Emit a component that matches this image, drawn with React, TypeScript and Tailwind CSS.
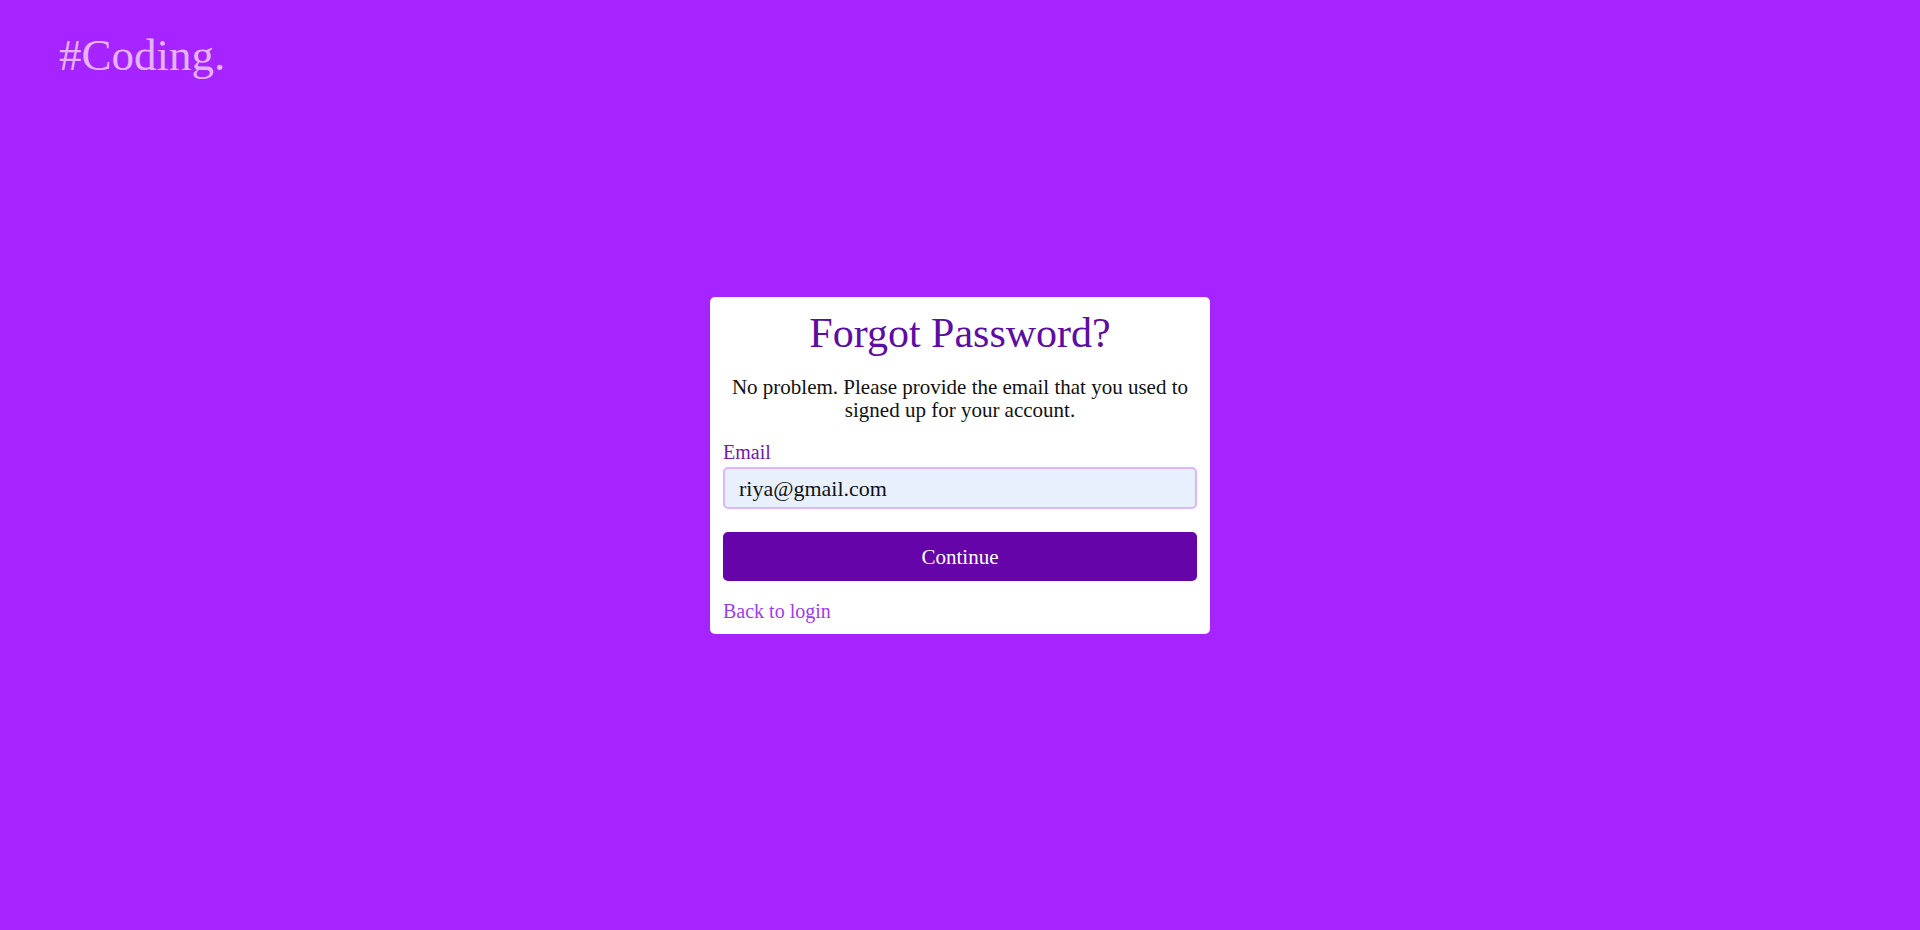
import React from "react";

export default function App() {
  return (
    <div
      className="h-screen w-full bg-[#a624ff] grid grid-rows-[1fr_auto_1fr]"
      style={{ fontFamily: '"Liberation Serif", "Times New Roman", serif' }}
    >
      <div className="self-start pl-[59px] pt-[30px]">
        <h1 className="text-[45px] leading-[50px] text-[#e6b2f8] font-normal">#Coding.</h1>
      </div>
      <div className="flex justify-center">
        <div className="w-[500px] bg-white rounded-[5px] px-[13px] pt-[12px] pb-[11px] flex flex-col">
          <h2 className="text-[42px] leading-[48px] text-center text-[#5c0ea2] font-normal">
            Forgot Password?
          </h2>
          <p className="mt-[19px] text-[21px] leading-[23px] text-center text-[#111111]">
            No problem. Please provide the email that you used to signed up for your account.
          </p>
          <label className="mt-[18px] text-[20px] leading-[24px] text-[#6b21a8]">Email</label>
          <input
            type="email"
            defaultValue="riya@gmail.com"
            className="mt-[3px] h-[42px] w-full rounded-[5px] border-2 border-[#dbb6fb] bg-[#e8f0fe] pl-[14px] pt-[2px] text-[22px] text-[#111111] outline-none"
            style={{ fontFamily: '"Liberation Serif", "Times New Roman", serif' }}
          />
          <button
            className="mt-[23px] h-[49px] w-full rounded-[5px] bg-[#6504a9] pt-[4px] text-white text-[21px]"
            style={{ fontFamily: '"Liberation Serif", "Times New Roman", serif' }}
          >
            Continue
          </button>
          <a href="#" className="mt-[18px] text-[20px] leading-[24px] text-[#9a3ee8] self-start">
            Back to login
          </a>
        </div>
      </div>
      <div />
    </div>
  );
}
